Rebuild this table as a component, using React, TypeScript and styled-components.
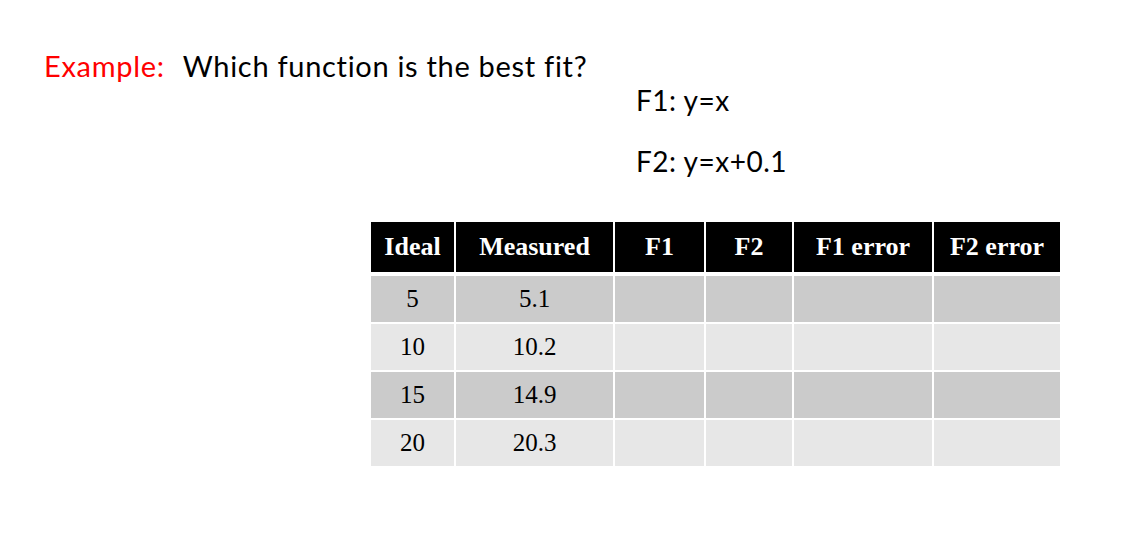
import React from "react";
import styled, { createGlobalStyle } from "styled-components";

const GlobalStyle = createGlobalStyle`
  html, body { margin: 0; padding: 0; background: #ffffff; }
  body { font-family: Lato, "Open Sans", sans-serif; }
`;

const Slide = styled.div`
  width: 1139px;
  height: 533px;
  box-sizing: border-box;
  padding-top: 51px;
  display: flex;
  flex-direction: column;
  background: #ffffff;
  overflow: hidden;
`;

const Title = styled.h1`
  margin: 0 0 0 44px;
  font-family: Lato, "Open Sans", sans-serif;
  font-weight: 400;
  font-size: 29px;
  letter-spacing: 0.7px;
  font-variant-ligatures: none;
  line-height: 30px;
  color: #000000;
  white-space: nowrap;
`;

const Label = styled.span`
  color: #ff0000;
  margin-right: 18px;
`;

const Functions = styled.div`
  margin: 4px 0 0 636px;
  display: flex;
  flex-direction: column;
  gap: 31px;
`;

const FunctionLine = styled.div`
  font-family: Lato, "Open Sans", sans-serif;
  font-size: 28px;
  letter-spacing: 0.5px;
  font-variant-ligatures: none;
  line-height: 30px;
  color: #000000;
  white-space: nowrap;
`;

const Grid = styled.div`
  margin: 46px 0 0 371px;
  display: grid;
  grid-template-columns: 83px 157px 89px 86px 138px 126px;
  grid-template-rows: 52px;
  grid-auto-rows: 46px;
  gap: 2px;
  width: 689px;
`;

const HeadCell = styled.div`
  background: #000000;
  color: #ffffff;
  font-family: "Liberation Serif", "Times New Roman", serif;
  font-weight: 700;
  font-size: 26px;
  display: flex;
  align-items: center;
  justify-content: center;
  margin-bottom: 2px;
  white-space: nowrap;
`;

const Cell = styled.div<{ $shade: "dark" | "light" }>`
  background: ${(p) => (p.$shade === "dark" ? "#cbcbcb" : "#e7e7e7")};
  color: #000000;
  font-family: "Liberation Serif", "Times New Roman", serif;
  font-size: 25px;
  display: flex;
  align-items: center;
  justify-content: center;
`;

const headers = ["Ideal", "Measured", "F1", "F2", "F1 error", "F2 error"];
const rows = [
  ["5", "5.1"],
  ["10", "10.2"],
  ["15", "14.9"],
  ["20", "20.3"],
];

export default function App() {
  return (
    <>
      <GlobalStyle />
      <Slide>
        <Title>
          <Label>Example:</Label>Which function is the best fit?
        </Title>
        <Functions>
          <FunctionLine>F1: y=x</FunctionLine>
          <FunctionLine>F2: y=x+0.1</FunctionLine>
        </Functions>
        <Grid>
          {headers.map((h) => (
            <HeadCell key={h}>{h}</HeadCell>
          ))}
          {rows.map((r, i) =>
            headers.map((h, j) => (
              <Cell key={`${i}-${h}`} $shade={i % 2 === 0 ? "dark" : "light"}>
                {r[j] ?? ""}
              </Cell>
            ))
          )}
        </Grid>
      </Slide>
    </>
  );
}
